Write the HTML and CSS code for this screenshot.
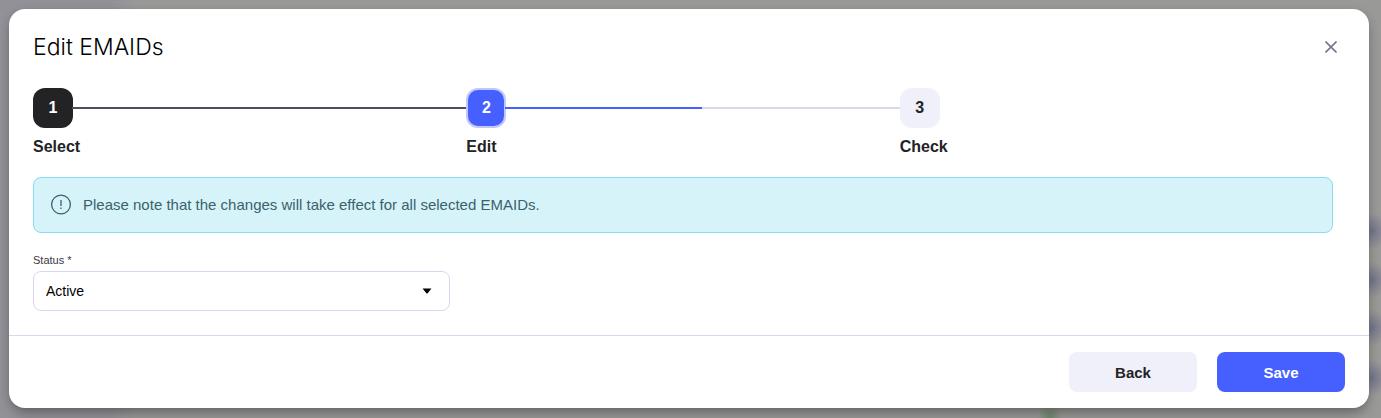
FILE: index.html
```html
<!DOCTYPE html>
<html lang="en">
<head>
    <meta charset="UTF-8">
    <meta name="viewport" content="width=device-width, initial-scale=1">
    <title>Edit EMAIDs</title>
    <link rel="stylesheet" href="styles.css">
</head>
<body>
<div class="dialog" role="dialog" aria-labelledby="dialog-title">
    <header class="dialog-header">
        <h1 class="dialog-title" id="dialog-title">Edit EMAIDs</h1>
        <button class="close-button" type="button" aria-label="Close">
            <svg width="12" height="12" viewBox="0 0 12 12" fill="none" stroke="currentColor" stroke-width="1.6">
                <path d="M.5.5l11 11M11.5.5l-11 11"/>
            </svg>
        </button>
    </header>
    <form class="dialog-form">
        <div class="dialog-content">
            <ol class="stepper">
                <li class="step step-done">
                    <div class="step-track">
                        <span class="step-number">1</span>
                        <span class="step-line"><span class="step-progress" style="width: 100%"></span></span>
                    </div>
                    <span class="step-label">Select</span>
                </li>
                <li class="step step-active" aria-current="step">
                    <div class="step-track">
                        <span class="step-number">2</span>
                        <span class="step-line"><span class="step-progress" style="width: 50%"></span></span>
                    </div>
                    <span class="step-label">Edit</span>
                </li>
                <li class="step">
                    <div class="step-track">
                        <span class="step-number">3</span>
                    </div>
                    <span class="step-label">Check</span>
                </li>
            </ol>
            <div class="notice" role="status">
                <svg width="22" height="22" viewBox="0 0 22 22" fill="none" stroke="currentColor">
                    <circle cx="11" cy="10.5" r="9.4" stroke-width="1.3"/>
                    <path d="M11 6v6M11 13.4v1.5" stroke-width="1.3"/>
                </svg>
                <span>Please note that the changes will take effect for all selected EMAIDs.</span>
            </div>
            <div class="field">
                <label class="field-label" for="status">Status *</label>
                <div class="select-box">
                    <select class="select" id="status" name="status" required>
                        <option selected>Active</option>
                        <option>Inactive</option>
                    </select>
                    <svg class="select-arrow" width="10" height="6" viewBox="0 0 10 6">
                        <path d="M.5.5h9L5.6 5.2q-.6.6-1.2 0z" fill="currentColor"/>
                    </svg>
                </div>
            </div>
        </div>
        <footer class="dialog-footer">
            <button class="button" type="button">Back</button>
            <button class="button button-primary" type="submit">Save</button>
        </footer>
    </form>
</div>
</body>
</html>
```

FILE: styles.css
```css
* {
    box-sizing: border-box;
}
body {
    margin: 0;
    padding: 9px 12px 10px 9px;
    font-family: "Liberation Sans", Arial, sans-serif;
    font-size: 15px;
    line-height: 20px;
    color: #232325;
    background:
        radial-gradient(circle at 1372px 231px, #74758d, transparent 18px),
        radial-gradient(circle at 1372px 280px, #74758d, transparent 18px),
        radial-gradient(circle at 1372px 328px, #74758d, transparent 18px),
        radial-gradient(circle at 1372px 378px, #74758d, transparent 18px),
        radial-gradient(circle at 1050px 416px, #6f8b6f, transparent 12px),
        linear-gradient(90deg, #929197 110px, #999998 135px);
}
.dialog {
    border-radius: 16px;
    background: #fff;
    box-shadow: 0 8px 14px -4px rgba(0, 0, 0, 0.3), 0 2px 10px rgba(0, 0, 0, 0.12);
}
.dialog-header {
    display: flex;
    align-items: center;
    justify-content: space-between;
    padding: 22px 26px 0 24px;
}
.dialog-title {
    margin: 0;
    font-family: Inter, sans-serif;
    font-size: 23px;
    font-weight: 300;
    line-height: 32px;
    color: #000;
}
.close-button {
    display: flex;
    align-items: center;
    justify-content: center;
    width: 24px;
    height: 24px;
    padding: 0;
    border: 0;
    background: none;
    color: #77748f;
    cursor: pointer;
}
.dialog-content {
    padding: 25px 36px 24px 24px;
}

/* Stepper */
.stepper {
    display: grid;
    grid-template-columns: repeat(3, 1fr);
    margin: 0 0 20px;
    padding: 0;
    list-style: none;
    font-size: 16px;
    font-weight: 700;
}
.step-track {
    display: flex;
    align-items: center;
    margin-bottom: 9px;
}
.step-number {
    display: flex;
    align-items: center;
    justify-content: center;
    width: 40px;
    height: 40px;
    border-radius: 12px;
    background: #f0f0fa;
}
.step-line {
    flex: 1;
    height: 2px;
    margin-left: -1px;
    background: #d9d7ee;
}
.step-progress {
    display: block;
    height: 2px;
}
.step-label {
    display: block;
}
.step-done .step-number {
    background: #232325;
    color: #fff;
}
.step-done .step-progress {
    background: #514c5e;
}
.step-active .step-number {
    border: 2px solid #c0c7fd;
    background: #465fff;
    color: #fff;
}
.step-active .step-progress {
    background: #465fff;
}

.notice {
    display: flex;
    align-items: center;
    gap: 11px;
    min-height: 56px;
    margin-bottom: 19px;
    padding: 8px 16px;
    border: 1px solid #85def0;
    border-radius: 8px;
    background: #d7f3fa;
    color: #3a626b;
}

/* Status field */
.field {
    width: 417px;
    max-width: 100%;
}
.field-label {
    display: block;
    margin-bottom: 3px;
    font-size: 11px;
    line-height: 16px;
    color: #39383f;
}
.select-box {
    display: grid;
    align-items: center;
}
.select,
.select-arrow {
    grid-area: 1 / 1;
}
.select {
    width: 100%;
    height: 40px;
    padding: 0 40px 0 12px;
    border: 1px solid #d9d7ee;
    border-radius: 8px;
    appearance: none;
    background: #fff;
    font-family: inherit;
    font-size: 14px;
    color: #000;
}
.select-arrow {
    justify-self: end;
    margin-right: 18px;
    color: #000;
    pointer-events: none;
}

.dialog-footer {
    display: flex;
    justify-content: flex-end;
    gap: 20px;
    padding: 16px 24px;
    border-top: 1px solid #d9d7ee;
}
.button {
    width: 128px;
    height: 40px;
    border: 0;
    border-radius: 8px;
    background: #f0f0fa;
    font-family: inherit;
    font-size: 15px;
    font-weight: 700;
    color: #232325;
    cursor: pointer;
}
.button-primary {
    background: #465fff;
    color: #fff;
}
```
